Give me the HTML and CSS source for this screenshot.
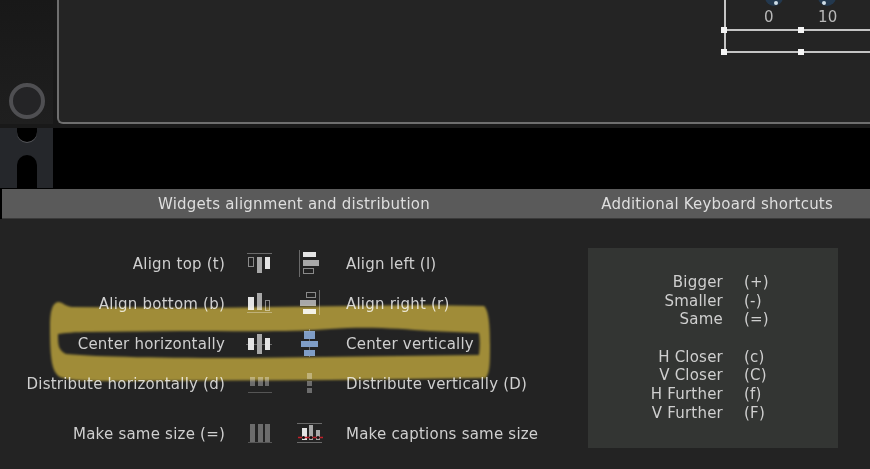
FILE: index.html
```html
<!DOCTYPE html>
<html lang="en">
<head>
<meta charset="utf-8">
<title>Widgets alignment and distribution</title>
<link rel="stylesheet" href="styles.css">
</head>
<body>
<div class="page">
  <section class="top">
    <div class="rail"><div class="screw"></div></div>
    <div class="canvas">
      <div class="knob knob-a"></div>
      <div class="knob knob-b"></div>
      <span class="knob-label label-a">0</span>
      <span class="knob-label label-b">10</span>
      <div class="wire wire-v"></div>
      <div class="wire wire-h1"></div>
      <div class="wire wire-h2"></div>
      <div class="handle h-a"></div>
      <div class="handle h-b"></div>
      <div class="handle h-c"></div>
      <div class="handle h-d"></div>
    </div>
  </section>
  <section class="gap">
    <div class="gap-rail">
      <div class="slot slot-top"></div>
      <div class="slot slot-bottom"></div>
    </div>
  </section>
  <header class="bar">
    <span class="bar-left">Widgets alignment and distribution</span>
    <span class="bar-right">Additional Keyboard shortcuts</span>
  </header>
  <main class="content">
    <div class="align-grid">
      <span class="cap">Align top (t)</span>
      <svg class="ic" viewBox="0 0 30 30"><path class="ln" d="M2 4.500H27"/><rect class="ol" x="3.500" y="8.500" width="5" height="9"/><rect class="gr" x="12" y="8" width="5" height="16"/><rect class="wh" x="20" y="8" width="5" height="12"/></svg>
      <svg class="ic" viewBox="0 0 30 30"><path class="ln" d="M5.500 1V28"/><rect class="wh" x="9" y="3" width="13" height="5"/><rect class="gr" x="9" y="11" width="16" height="6"/><rect class="ol" x="9.500" y="19.500" width="10" height="5"/></svg>
      <span class="cap-r">Align left (l)</span>

      <span class="cap">Align bottom (b)</span>
      <svg class="ic" viewBox="0 0 30 30"><path class="ln" d="M2 23.500H27"/><rect class="wh" x="3" y="8" width="6" height="13"/><rect class="gr" x="12" y="4" width="5" height="17"/><rect class="ol" x="20.500" y="11.500" width="4" height="10"/></svg>
      <svg class="ic" viewBox="0 0 30 30"><path class="ln" d="M25.500 1V26"/><rect class="ol" x="12.500" y="3.500" width="9" height="5"/><rect class="gr" x="6" y="11" width="16" height="6"/><rect class="wh" x="9" y="20" width="13" height="5"/></svg>
      <span class="cap-r">Align right (r)</span>

      <span class="cap">Center horizontally</span>
      <svg class="ic" viewBox="0 0 30 30"><path class="ln" d="M1 15.500H27"/><rect class="wh" x="3" y="9" width="6" height="12"/><rect class="gr" x="12" y="5" width="5" height="20"/><rect class="wh" x="20" y="9" width="5" height="12"/></svg>
      <svg class="ic" viewBox="0 0 30 30"><path class="ln" d="M15.500 0V28"/><rect class="bl" x="10" y="2" width="11" height="8"/><rect class="bl" x="7" y="12" width="17" height="6"/><rect class="bl" x="10" y="21" width="11" height="6"/></svg>
      <span class="cap-r">Center vertically</span>

      <span class="cap">Distribute horizontally (d)</span>
      <svg class="ic" viewBox="0 0 30 30"><path class="ln dim" d="M3 23.500H27"/><rect class="dm" x="5" y="8" width="5" height="9"/><rect class="dm" x="13" y="8" width="5" height="9"/><rect class="dm" x="20" y="8" width="4" height="9"/></svg>
      <svg class="ic" viewBox="0 0 30 30"><rect class="dm" x="13" y="4" width="5" height="6"/><rect class="dm" x="13" y="12" width="5" height="5"/><rect class="dm" x="13" y="19" width="5" height="5"/></svg>
      <span class="cap-r">Distribute vertically (D)</span>

      <span class="cap">Make same size (=)</span>
      <svg class="ic" viewBox="0 0 30 30"><path class="ln dim" d="M3 23.500H27"/><rect class="dm" x="5" y="5" width="5" height="18"/><rect class="dm" x="13" y="5" width="5" height="18"/><rect class="dm" x="20" y="5" width="5" height="18"/></svg>
      <svg class="ic" viewBox="0 0 30 30"><path class="ln" d="M3 4.500H28M3 23.500H28"/><rect class="wh" x="8" y="9" width="5" height="12"/><rect class="gr" x="15" y="6" width="4" height="15"/><rect class="gr" x="22" y="11" width="4" height="10"/><path class="red" d="M4 18.500H29"/><circle class="dot" cx="9.500" cy="18.500" r="1.500"/><circle class="dot" cx="17" cy="18.500" r="1.500"/><circle class="dot" cx="24" cy="18.500" r="1.500"/></svg>
      <span class="cap-r">Make captions same size</span>
    </div>
    <aside class="keys">
      <span class="k">Bigger</span><span>(+)</span>
      <span class="k">Smaller</span><span>(-)</span>
      <span class="k">Same</span><span>(=)</span>
      <span class="k">&nbsp;</span><span>&nbsp;</span>
      <span class="k">H Closer</span><span>(c)</span>
      <span class="k">V Closer</span><span>(C)</span>
      <span class="k">H Further</span><span>(f)</span>
      <span class="k">V Further</span><span>(F)</span>
    </aside>
  </main>
  <svg class="marker" viewBox="0 0 870 469" aria-hidden="true">
    <path fill-rule="evenodd" d="M50 326 C50 312 52 303 58 302 C63 302 64 306 72 307 L200 308 L350 306 C400 305 440 305 484 306 C488 310 490 320 490 345 C490 362 490 372 486 378 L330 380 L120 381 C90 381 70 381 60 377 C52 372 50 360 50 326 Z M58 334 C58 345 58 350 66 354 C100 357 160 358 250 358 L400 356 L479 355 C480 345 480 340 479 333 L430 331 C400 329 370 326 330 329 C300 332 240 331 180 331 L90 332 C75 332 64 333 58 334 Z"/>
  </svg>
</div>
</body>
</html>
```

FILE: styles.css
```css
html, body {
  margin: 0;
  padding: 0;
  background: #000;
}

.page {
  position: relative;
  width: 870px;
  height: 469px;
  overflow: hidden;
  display: flex;
  flex-direction: column;
  font-family: "DejaVu Sans", Verdana, sans-serif;
  font-size: 15px;
  letter-spacing: 0.22px;
  color: #cfcfcf;
  filter: blur(0.35px);
}

.top {
  display: flex;
  height: 128px;
  padding-bottom: 4px;
  box-sizing: border-box;
  background: #191919;
}

.rail {
  width: 53px;
  background: linear-gradient(#181818, #1f1f1f);
  position: relative;
}

.screw {
  position: absolute;
  left: 9px;
  top: 83px;
  width: 28px;
  height: 28px;
  border: 4px solid #4f4f52;
  border-radius: 50%;
  background: #242426;
}

.canvas {
  position: relative;
  flex: 1;
  margin-left: 4px;
  background: #242424;
  border-left: 2px solid #6f6f6f;
  border-bottom: 2px solid #6f6f6f;
  border-bottom-left-radius: 6px;
}

.knob {
  position: absolute;
  top: -12px;
  width: 18px;
  height: 18px;
  border-radius: 50%;
  background: #23384e;
  overflow: hidden;
}

.knob::after {
  content: "";
  position: absolute;
  top: 13px;
  width: 4px;
  height: 4px;
  border-radius: 50%;
  background: #cfdde6;
}

.knob-a { left: 706px; }
.knob-a::after { left: 9px; }
.knob-b { left: 759px; }
.knob-b::after { left: 4px; }

.knob-label {
  position: absolute;
  top: 9px;
  line-height: 17px;
  color: #b8b8b8;
}

.label-a { left: 705px; }
.label-b { left: 759px; }

.wire {
  position: absolute;
  background: #c4c4c4;
}

.wire-v { left: 665px; top: 0; width: 2px; height: 53px; }
.wire-h1 { left: 665px; right: 0; top: 29px; height: 2px; }
.wire-h2 { left: 665px; right: 0; top: 51px; height: 2px; }

.handle {
  position: absolute;
  width: 6px;
  height: 6px;
  background: #f4f4f4;
}

.h-a { left: 662px; top: 27px; }
.h-b { left: 739px; top: 27px; }
.h-c { left: 662px; top: 49px; }
.h-d { left: 739px; top: 49px; }

.gap {
  height: 60px;
  background: #000;
}

.gap-rail {
  position: relative;
  width: 53px;
  height: 100%;
  background: #25272b;
  overflow: hidden;
}

.slot {
  position: absolute;
  left: 17px;
  width: 20px;
  background: #000;
}

.slot-top {
  top: -6px;
  height: 20px;
  border-radius: 0 0 10px 10px;
  box-shadow: 0 1px 0 #55565a;
}

.slot-bottom {
  top: 27px;
  height: 40px;
  border-radius: 10px 10px 0 0;
}

.bar {
  display: flex;
  justify-content: space-between;
  height: 30px;
  margin: 1px 0 0 2px;
  padding: 0 37px 0 156px;
  box-sizing: border-box;
  align-items: center;
  background: #5a5a5a;
  border-bottom: 1px solid #3a3a3a;
  color: #dedede;
}

.content {
  display: flex;
  flex: 1;
  background: #232323;
}

.align-grid {
  width: 588px;
  padding-top: 25px;
  box-sizing: border-box;
  display: grid;
  grid-template-columns: 225px 29px 30px 1fr;
  grid-template-rows: 40px 40px 40px 40px 60px;
  column-gap: 20px;
  align-items: center;
  align-content: start;
}

.cap { text-align: right; white-space: nowrap; }
.cap-r { margin-left: 2px; white-space: nowrap; }

.ic { width: 30px; height: 30px; display: block; }
.ln { stroke: #6a6a6a; fill: none; stroke-width: 1; }
.ln.dim { stroke: #555; }
.ol { fill: none; stroke: #8a8a8a; stroke-width: 1; }
.gr { fill: #a8a8a8; }
.wh { fill: #e4e4e4; }
.bl { fill: #7f9dc6; }
.dm { fill: #6c6c6c; }
.red { stroke: #c0202a; stroke-width: 1.5; fill: none; }
.dot { fill: #111; }

.keys {
  width: 250px;
  height: 200px;
  margin-top: 29px;
  padding-top: 25px;
  box-sizing: border-box;
  background: #333533;
  display: grid;
  grid-template-columns: 135px 1fr;
  grid-auto-rows: 18.7px;
  column-gap: 21px;
  line-height: 18.7px;
}

.k { text-align: right; }

.marker {
  position: absolute;
  left: 0;
  top: 0;
  width: 870px;
  height: 469px;
  fill: #917a18;
  mix-blend-mode: screen;
  pointer-events: none;
}

.marker path {
  filter: blur(1px);
}
```
